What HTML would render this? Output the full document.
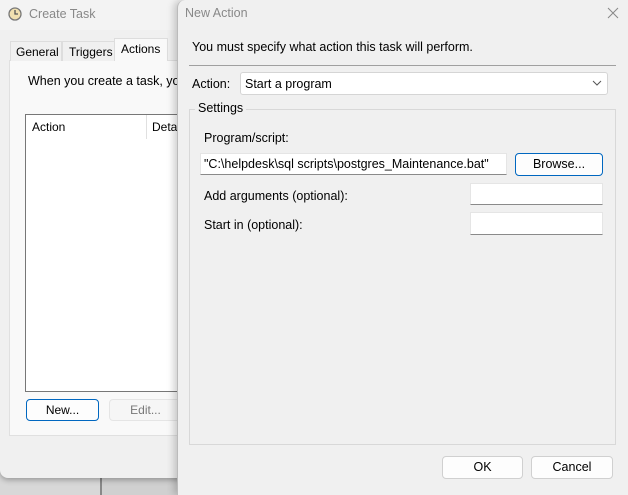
<!DOCTYPE html>
<html><head><style>
*{box-sizing:border-box;margin:0;padding:0}
body{width:628px;height:495px;overflow:hidden;background:#d8d8d8;font-family:"Liberation Sans",sans-serif;font-size:12px;color:#000;position:relative}
.a{position:absolute}
.btn{position:absolute;background:#fdfdfd;border:1px solid #d0d0d0;border-radius:4px;text-align:center;line-height:20px}
.inp{position:absolute;background:#fff;border:1px solid #e5e5e5;border-bottom:1px solid #8a8a8a}
</style></head><body>
<div class="a" style="left:100px;top:470px;width:80px;height:25px;background:#d0d0d0;border-left:2px solid #888"></div>
<div class="a" style="left:0;top:0;width:190px;height:478px;background:#f0f0f0;border-radius:0 0 8px 8px;box-shadow:0 2px 6px rgba(0,0,0,.3)"></div>
<div class="a" style="left:0;top:0;width:190px;height:30px;background:#f3f3f3"></div>
<svg class="a" style="left:8px;top:7px" width="14" height="14" viewBox="0 0 14 14"><circle cx="7" cy="7" r="6" fill="#f0e0b0" stroke="#777" stroke-width="1.3"/><path d="M7 3v4h3" stroke="#555" stroke-width="1.3" fill="none"/></svg>
<div class="a" style="left:29px;top:7px;color:#888;font-size:12.5px">Create Task</div>
<div class="a" style="left:9px;top:60px;width:175px;height:376px;background:#f9f9f9;border:1px solid #e0e0e0"></div>
<div class="a" style="left:10px;top:41px;width:52px;height:20px;border:1px solid #ddd;border-bottom:none;background:#f0f0f0;padding:3px 5px">General</div>
<div class="a" style="left:62px;top:41px;width:53px;height:20px;border:1px solid #ddd;border-bottom:none;background:#f0f0f0;padding:3px 6px">Triggers</div>
<div class="a" style="left:114px;top:38px;width:54px;height:23px;border:1px solid #ddd;border-bottom:none;background:#f9f9f9;padding:3px 6px">Actions</div>
<div class="a" style="left:28px;top:74px;font-size:12.5px;white-space:nowrap">When you create a task, you</div>
<div class="a" style="left:25px;top:114px;width:160px;height:278px;background:#fff;border:1px solid #777"></div>
<div class="a" style="left:146px;top:115px;width:1px;height:24px;background:#e0e0e0"></div>
<div class="a" style="left:32px;top:120px">Action</div>
<div class="a" style="left:152px;top:120px">Deta</div>
<div class="btn" style="left:26px;top:399px;width:73px;height:22px;border:1px solid #0067c0">New...</div>
<div class="btn" style="left:109px;top:399px;width:73px;height:22px;color:#777;background:#f6f6f6;border-color:#e5e5e5">Edit...</div>

<div class="a" style="left:177px;top:0;width:451px;height:495px;background:#f0f0f0;border-left:1px solid #bbb;border-radius:8px 0 0 0;box-shadow:-3px 0 8px rgba(0,0,0,.2)"></div>
<div class="a" style="left:185px;top:6px;color:#888;font-size:12.5px">New Action</div>
<svg class="a" style="left:607px;top:7px" width="12" height="12"><path d="M1 1l10 10M11 1L1 11" stroke="#888" stroke-width="1"/></svg>
<div class="a" style="left:192px;top:40px;font-size:12.5px">You must specify what action this task will perform.</div>
<div class="a" style="left:189px;top:65px;width:427px;height:1px;background:#a0a0a0"></div>
<div class="a" style="left:192px;top:77px;font-size:12.5px">Action:</div>
<div class="a" style="left:240px;top:72px;width:368px;height:23px;background:#fff;border:1px solid #d5d5d5;border-radius:3px;padding:4px 4px;font-size:12.5px">Start a program</div>
<svg class="a" style="left:592px;top:80px" width="10" height="6"><path d="M1 1l4 4 4-4" stroke="#555" fill="none"/></svg>
<div class="a" style="left:189px;top:109px;width:427px;height:336px;border:1px solid #d8d8d8"></div>
<div class="a" style="left:195px;top:101px;background:#f0f0f0;padding:0 3px;font-size:12.5px">Settings</div>
<div class="a" style="left:204px;top:131px;font-size:12.5px">Program/script:</div>
<div class="inp" style="left:200px;top:153px;width:307px;height:22px;padding:3px 3px;font-size:12.5px">"C:\helpdesk\sql scripts\postgres_Maintenance.bat"</div>
<div class="btn" style="left:515px;top:153px;width:88px;height:23px;border:1px solid #0067c0;font-size:12.5px">Browse...</div>
<div class="a" style="left:204px;top:189px;font-size:12.5px">Add arguments (optional):</div>
<div class="inp" style="left:470px;top:183px;width:133px;height:22px"></div>
<div class="a" style="left:204px;top:218px;font-size:12.5px">Start in (optional):</div>
<div class="inp" style="left:470px;top:212px;width:133px;height:23px"></div>
<div class="btn" style="left:442px;top:456px;width:81px;height:23px;font-size:12.5px">OK</div>
<div class="btn" style="left:531px;top:456px;width:82px;height:23px;font-size:12.5px">Cancel</div>
</body></html>
